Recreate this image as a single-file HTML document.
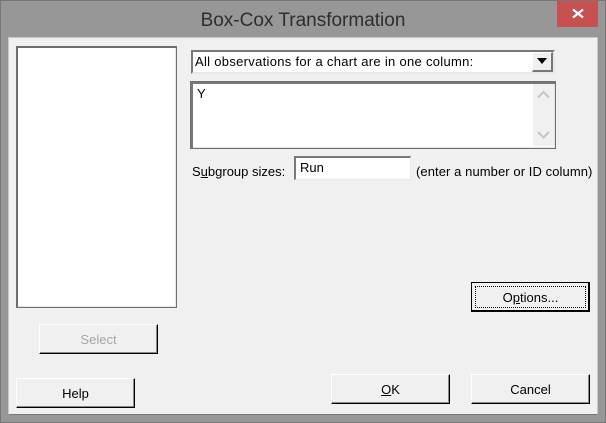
<!DOCTYPE html>
<html><head><meta charset="utf-8">
<style>
html,body{margin:0;padding:0;width:606px;height:423px;overflow:hidden;background:#979797}
*{box-sizing:border-box}
body{position:relative;font-family:"Liberation Sans",sans-serif;font-size:12px;color:#000}
.a{position:absolute}
.t{position:absolute;white-space:nowrap;line-height:14px}
.btn{position:absolute;width:119px;height:30px;background:#f0f0f0;border-top:1px solid #fff;border-left:1px solid #fff;border-right:1px solid #000;border-bottom:1px solid #000;box-shadow:inset -1px -1px 0 #8a8a8a;text-align:center;line-height:29px;font-family:"Liberation Sans",sans-serif;font-size:13px}
u{text-decoration:underline}
</style></head>
<body>
<div class="a" style="left:0;top:0;width:606px;height:423px;border:1px solid #777"></div>
<div class="t" style="left:0;top:10px;width:606px;text-align:center;font-family:'Liberation Sans',sans-serif;font-size:19px;line-height:22px;color:#2e2e2e">Box-Cox Transformation</div>
<div class="a" style="left:557px;top:1px;width:41px;height:26px;background:#c75050"></div>
<svg class="a" style="left:571px;top:8px" width="14" height="12"><path d="M2 1.5L12 9.5M12 1.5L2 9.5" stroke="#fff" stroke-width="2.2" fill="none"/></svg>

<div class="a" style="left:8px;top:37px;width:590px;height:378px;background:#f0f0f0;border-top:1px solid #c8c8c8;border-left:1px solid #c8c8c8;border-right:1px solid #c8c8c8;border-bottom:1px solid #777"></div>

<!-- variable list -->
<div class="a" style="left:16px;top:46px;width:161px;height:262px;background:#fff;border:1px solid #6e6e6e;box-shadow:inset 1px 1px 0 #6e6e6e,inset -1px -1px 0 #e8e8e8"></div>

<!-- combo -->
<div class="a" style="left:191px;top:50px;width:364px;height:24px;background:#fff;border-top:2px solid #787878;border-left:2px solid #787878;border-right:2px solid #e8e8e8;border-bottom:2px solid #e8e8e8"></div>
<div class="t" style="left:195px;top:55px;font-family:'Liberation Sans',sans-serif;font-size:13px;letter-spacing:.3px">All observations for a chart are in one column:</div>
<div class="a" style="left:532px;top:52px;width:21px;height:20px;background:#f0f0f0;border-top:1px solid #fff;border-left:1px solid #fff;border-right:2px solid #777;border-bottom:2px solid #777"></div>
<svg class="a" style="left:537px;top:58px" width="12" height="7"><path d="M0 0H10L5 6Z" fill="#000"/></svg>

<!-- listbox -->
<div class="a" style="left:190px;top:81px;width:366px;height:68px;background:#fff;border:1px solid #6e6e6e;box-shadow:inset 2px 2px 0 #787878,inset -1px -1px 0 #e4e4e4"></div>
<div class="a" style="left:533px;top:84px;width:21px;height:62px;background:#f0f0f0"></div>
<svg class="a" style="left:537px;top:90px" width="14" height="10"><path d="M1 7.5L6.5 2L12 7.5" stroke="#c4c4c4" stroke-width="2" fill="none"/></svg>
<svg class="a" style="left:537px;top:130px" width="14" height="10"><path d="M1 2L6.5 7.5L12 2" stroke="#c4c4c4" stroke-width="2" fill="none"/></svg>
<div class="t" style="left:197px;top:87px;font-family:'Liberation Sans',sans-serif;font-size:13px">Y</div>

<!-- subgroup -->
<div class="t" style="left:192px;top:165px;font-family:'Liberation Sans',sans-serif;font-size:13px">S<u>u</u>bgroup sizes:</div>
<div class="a" style="left:294px;top:156px;width:117px;height:24px;background:#fff;border-top:2px solid #787878;border-left:2px solid #787878;border-right:1px solid #e8e8e8;border-bottom:1px solid #e8e8e8"></div>
<div class="t" style="left:300px;top:161px;font-family:'Liberation Sans',sans-serif;font-size:13px">Run</div>
<div class="t" style="left:416px;top:165px;font-family:'Liberation Sans',sans-serif;font-size:13px;letter-spacing:.08px">(enter a number or ID column)</div>

<!-- buttons -->
<div class="btn" style="left:471px;top:282px;border:1px solid #000;box-shadow:inset -1px -1px 0 #000">O<u>p</u>tions...</div>
<div class="a" style="left:475px;top:286px;width:111px;height:22px;border:1px dotted #000"></div>
<div class="btn" style="left:39px;top:324px;color:#a6a6a6">Select</div>
<div class="btn" style="left:16px;top:378px">Help</div>
<div class="btn" style="left:331px;top:374px"><u>O</u>K</div>
<div class="btn" style="left:471px;top:374px">Cancel</div>
</body></html>
